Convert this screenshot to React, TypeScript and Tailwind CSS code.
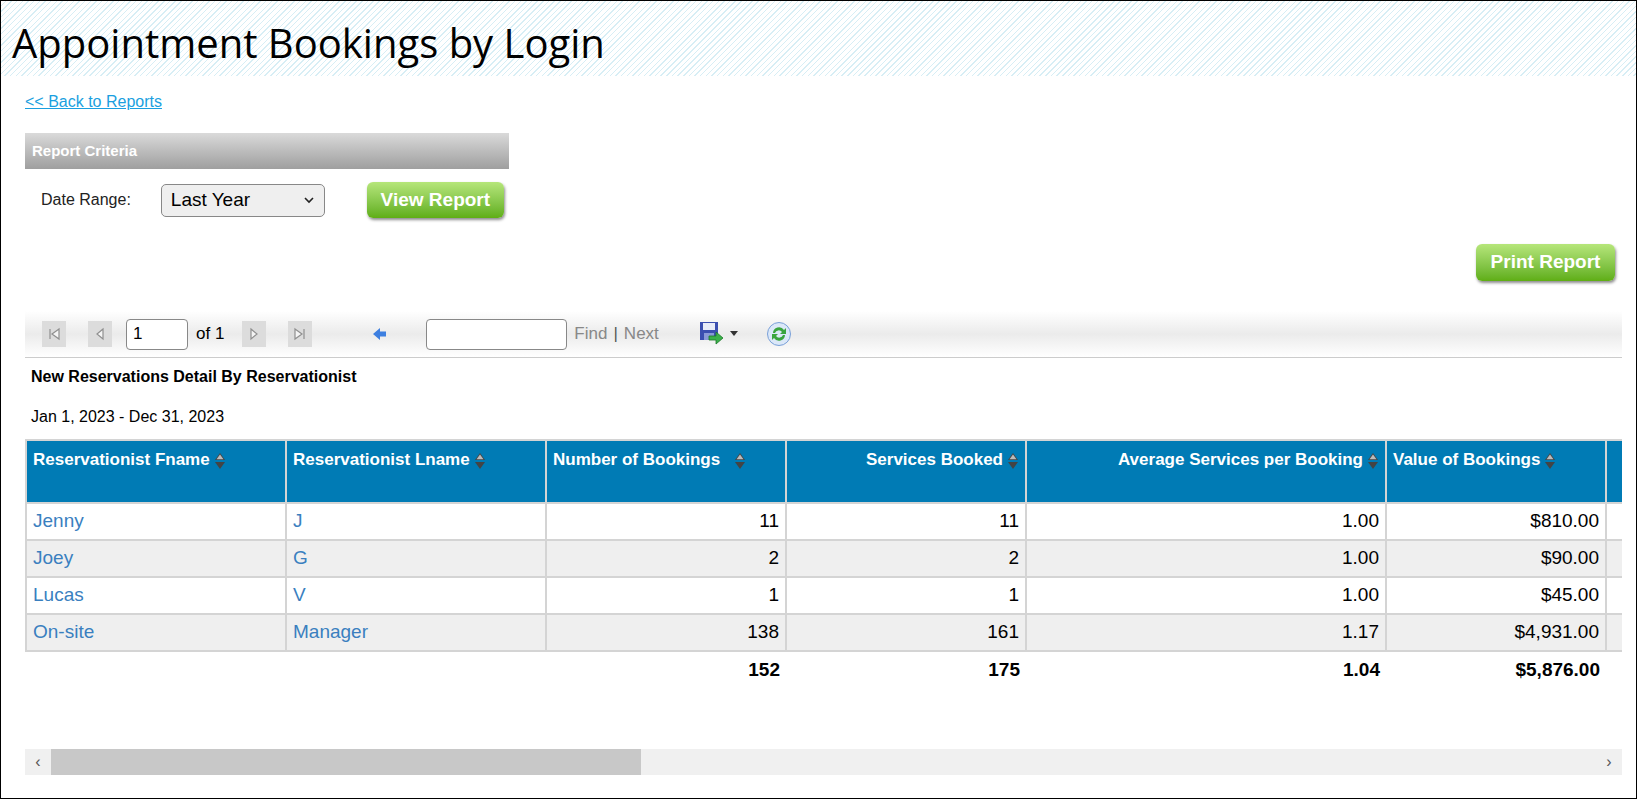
import React from "react";

const rows = [
  ["Jenny", "J", "11", "11", "1.00", "$810.00"],
  ["Joey", "G", "2", "2", "1.00", "$90.00"],
  ["Lucas", "V", "1", "1", "1.00", "$45.00"],
  ["On-site", "Manager", "138", "161", "1.17", "$4,931.00"],
];

function Sort() {
  return (
    <svg width="12" height="18" viewBox="0 0 12 18" className="inline-block ml-1 align-middle">
      <path d="M6 1 L11 8 H1 Z" fill="#444" />
      <path d="M6 17 L11 10 H1 Z" fill="#444" />
      <path d="M6 2.5 L9.5 7.3 H2.5 Z" fill="#bbb" />
    </svg>
  );
}

function NavBtn({ d }: { d: string }) {
  return (
    <div className="w-[24px] h-[26px] bg-[#dcdcdc] flex items-center justify-center">
      <svg width="16" height="18" viewBox="0 0 16 18">
        <path d={d} fill="#f4f4f4" stroke="#8f8f8f" strokeWidth="1.2" />
      </svg>
    </div>
  );
}

export default function App() {
  return (
    <div className="w-[1637px] h-[799px] border border-black bg-white overflow-hidden" style={{ fontFamily: '"Liberation Sans", Arial, sans-serif' }}>
      <div className="h-[75px] pl-[11px] pt-[18px] bg-[repeating-linear-gradient(135deg,#ffffff_0px,#ffffff_3px,#d7eef5_3px,#d7eef5_4px)]">
        <h1 className="text-[40px] leading-[48px] text-black" style={{ fontFamily: '"Open Sans", sans-serif' }}>
          Appointment Bookings by Login
        </h1>
      </div>
      <div className="pl-[24px]">
        <a href="#" className="block mt-[16px] text-[16px] text-[#1a9fe0] underline leading-[20px]">&lt;&lt; Back to Reports</a>
        <div className="mt-[21px] w-[484px] h-[36px] bg-gradient-to-b from-[#dadada] to-[#9f9f9f] flex items-center pl-[7px] text-white font-bold text-[15px]">
          Report Criteria
        </div>
        <div className="flex items-center mt-[12px] pl-[16px] h-[38px]">
          <span className="text-[16px] text-[#222]">Date Range:</span>
          <div className="ml-[30px] w-[164px] h-[33px] border border-[#888] rounded-[5px] bg-[#efefef] flex items-center justify-between px-[9px] text-[19px]">
            Last Year
            <svg width="12" height="8" viewBox="0 0 12 8"><path d="M2 2 L6 6 L10 2" fill="none" stroke="#222" strokeWidth="1.6" /></svg>
          </div>
          <button className="ml-[42px] w-[137px] h-[36px] rounded-[6px] bg-gradient-to-b from-[#b6e67a] to-[#5fae12] text-white font-bold text-[19px] shadow-[1px_2px_3px_rgba(0,0,0,0.45)]">View Report</button>
        </div>
        <div className="flex justify-end w-[1590px] mt-[25px]">
          <button className="w-[139px] h-[37px] rounded-[6px] bg-gradient-to-b from-[#b6e67a] to-[#5fae12] text-white font-bold text-[19px] shadow-[1px_2px_3px_rgba(0,0,0,0.45)]">Print Report</button>
        </div>
        <div className="mt-[30px] w-[1597px] h-[47px] border-b border-[#ccc] bg-gradient-to-b from-white via-[#ebebeb] to-white flex items-center pl-[17px] text-[17px]">
          <NavBtn d="M4 4 V14 M13 4 L6 9 L13 14 Z" />
          <div className="w-[22px]" />
          <NavBtn d="M11 4 L5 9 L11 14 Z" />
          <div className="ml-[14px] w-[62px] h-[31px] border border-[#888] rounded-[4px] bg-white pl-[6px] flex items-center">1</div>
          <span className="ml-[8px] mr-[18px]">of 1</span>
          <NavBtn d="M5 4 L11 9 L5 14 Z" />
          <div className="w-[22px]" />
          <NavBtn d="M3 4 L10 9 L3 14 Z M12 4 V14" />
          <svg width="16" height="16" viewBox="0 0 16 16" className="ml-[60px]"><path d="M1 8 L8 2 V5.5 H14 V10.5 H8 V14 Z" fill="#3d7fe0" /></svg>
          <div className="ml-[38px] w-[141px] h-[31px] border border-[#888] rounded-[4px] bg-white" />
          <span className="ml-[7px] text-[#888]">Find</span>
          <span className="mx-[6px] text-[#555]">|</span>
          <span className="text-[#888]">Next</span>
          <svg width="28" height="26" viewBox="0 0 28 26" className="ml-[40px]">
            <rect x="1" y="1" width="18" height="18" fill="#3b4fb0" />
            <rect x="4" y="2" width="12" height="7" fill="#e8ecf8" />
            <rect x="5" y="12" width="10" height="7" fill="#8a9ad8" />
            <path d="M10 15 H17 V11 L24 17 L17 23 V19 H10 Z" fill="#3bb04a" stroke="#1c7a28" strokeWidth="0.8" />
          </svg>
          <svg width="8" height="6" viewBox="0 0 8 6" className="ml-[3px]"><path d="M0 0 H8 L4 5 Z" fill="#333" /></svg>
          <svg width="26" height="26" viewBox="0 0 26 26" className="ml-[28px]">
            <circle cx="13" cy="13" r="11.5" fill="#dbe8f8" stroke="#7aa0d8" />
            <path d="M7 12 A6 6 0 0 1 18 9 L20 7 V13 H14 L16 11 A4 4 0 0 0 9 12 Z" fill="#3aa53e" />
            <path d="M19 14 A6 6 0 0 1 8 17 L6 19 V13 H12 L10 15 A4 4 0 0 0 17 14 Z" fill="#3aa53e" />
          </svg>
        </div>
        <div className="mt-[9px] pl-[6px] font-bold text-[16px] leading-[20px]">New Reservations Detail By Reservationist</div>
        <div className="mt-[20px] pl-[6px] text-[16px] leading-[20px]">Jan 1, 2023 - Dec 31, 2023</div>
        <div className="mt-[12px] w-[1597px] overflow-hidden">
          <table className="border-collapse text-[19px] w-[1620px] table-fixed">
            <colgroup>
              <col className="w-[260px]" />
              <col className="w-[260px]" />
              <col className="w-[240px]" />
              <col className="w-[240px]" />
              <col className="w-[360px]" />
              <col className="w-[220px]" />
              <col className="w-[40px]" />
            </colgroup>
            <thead>
              <tr className="bg-[#007bb5] text-white text-[17px] font-bold h-[63px] align-top">
                <th className="text-left px-[6px] pt-[6px] border-2 border-[#d4d4d4]">Reservationist Fname<Sort /></th>
                <th className="text-left px-[6px] pt-[6px] border-2 border-[#d4d4d4]">Reservationist Lname<Sort /></th>
                <th className="text-left px-[6px] pt-[6px] border-2 border-[#d4d4d4]">Number of Bookings&nbsp;&nbsp;<Sort /></th>
                <th className="text-right px-[6px] pt-[6px] border-2 border-[#d4d4d4]">Services Booked<Sort /></th>
                <th className="text-right px-[6px] pt-[6px] border-2 border-[#d4d4d4]">Average Services per Booking<Sort /></th>
                <th className="text-left px-[6px] pt-[6px] border-2 border-[#d4d4d4]">Value of Bookings<Sort /></th>
                <th className="border-2 border-[#d4d4d4]"></th>
              </tr>
            </thead>
            <tbody>
              {rows.map((r, i) => (
                <tr key={i} className={`h-[37px] ${i % 2 ? "bg-[#efefef]" : "bg-white"}`}>
                  <td className="px-[6px] border-2 border-[#d4d4d4] text-[#3a7fbf]">{r[0]}</td>
                  <td className="px-[6px] border-2 border-[#d4d4d4] text-[#3a7fbf]">{r[1]}</td>
                  {r.slice(2).map((c, j) => (
                    <td key={j} className="px-[6px] border-2 border-[#d4d4d4] text-right">{c}</td>
                  ))}
                  <td className="border-2 border-[#d4d4d4]"></td>
                </tr>
              ))}
              <tr className="h-[38px] font-bold">
                <td></td>
                <td></td>
                <td className="px-[6px] text-right">152</td>
                <td className="px-[6px] text-right">175</td>
                <td className="px-[6px] text-right">1.04</td>
                <td className="px-[6px] text-right">$5,876.00</td>
                <td></td>
              </tr>
            </tbody>
          </table>
        </div>
        <div className="mt-[60px] w-[1597px] h-[26px] bg-[#f0f0f0] flex items-center">
          <span className="w-[26px] text-center text-[#555] text-[16px]">‹</span>
          <div className="w-[590px] h-full bg-[#c8c8c8]" />
          <div className="flex-1" />
          <span className="w-[26px] text-center text-[#555] text-[16px]">›</span>
        </div>
      </div>
    </div>
  );
}
